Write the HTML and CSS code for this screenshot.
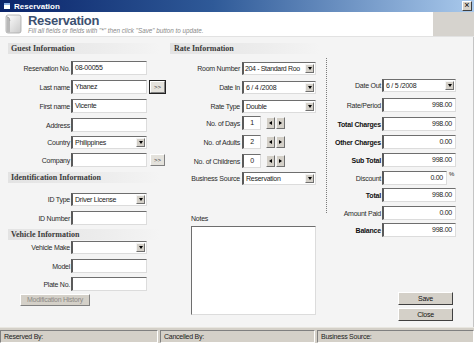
FILE: index.html
```html
<!DOCTYPE html>
<html>
<head>
<meta charset="utf-8">
<title>Reservation</title>
<link rel="stylesheet" href="styles.css">
</head>
<body>
<div class="window">
  <div class="titlebar">
    <span class="tb-icon"></span>
    <span class="tb-title">Reservation</span>
    <span class="tb-close">×</span>
  </div>
  <div class="header">
    <svg class="hdr-icon" viewBox="0 0 17 20" width="17" height="20">
      <defs>
        <linearGradient id="pg" x1="0" y1="0" x2="1" y2="1">
          <stop offset="0" stop-color="#ffffff"/>
          <stop offset="1" stop-color="#c9c9c9"/>
        </linearGradient>
      </defs>
      <rect x="1" y="1" width="15" height="18" rx="2" fill="url(#pg)" stroke="#a8a8a8" stroke-width="0.8"/>
      <path d="M1.5 2.5 Q5 3 5 7 L5 18.5 L2 18.5 Q1.5 18.5 1.5 17.5 Z" fill="#b9b9b9"/>
      <path d="M5 7 Q5 3 1.5 2.5" fill="none" stroke="#8f8f8f" stroke-width="0.6"/>
    </svg>
    <div class="hdr-text">
      <div class="hdr-title">Reservation</div>
      <div class="hdr-sub">Fill all fields or fields with "*" then click "Save" button to update.</div>
    </div>
    <div class="hdr-grey"></div>
  </div>

  <div class="content">
    <div class="col-left">
      <div class="sect sect-left m6">Guest Information</div>
      <div class="row m7"><span class="lbl">Reservation No.</span><span class="inp">08-00055</span></div>
      <div class="row m5"><span class="lbl">Last name</span><span class="inp">Ybanez</span><span class="btn-more focus">&gt;&gt;</span></div>
      <div class="row m5"><span class="lbl">First name</span><span class="inp">Vicente</span></div>
      <div class="row m5"><span class="lbl">Address</span><span class="inp"></span></div>
      <div class="row sel-row m4"><span class="lbl">Country</span><span class="sel"><span class="sel-text">Philippines</span><span class="sel-btn"></span></span></div>
      <div class="row m4"><span class="lbl">Company</span><span class="inp"></span><span class="btn-more">&gt;&gt;</span></div>
      <div class="sect sect-left m5">Identification Information</div>
      <div class="row sel-row m10"><span class="lbl">ID Type</span><span class="sel"><span class="sel-text">Driver License</span><span class="sel-btn"></span></span></div>
      <div class="row m5"><span class="lbl">ID Number</span><span class="inp"></span></div>
      <div class="sect sect-left m4">Vehicle Information</div>
      <div class="row sel-row m1"><span class="lbl">Vehicle Make</span><span class="sel"><span class="sel-text"></span><span class="sel-btn"></span></span></div>
      <div class="row m5"><span class="lbl">Model</span><span class="inp"></span></div>
      <div class="row m4"><span class="lbl">Plate No.</span><span class="inp"></span></div>
      <div class="btn-hist m3">Modification History</div>
    </div>

    <div class="col-mid">
      <div class="sect sect-mid m6">Rate Information</div>
      <div class="row sel-row m8"><span class="lbl">Room Number</span><span class="sel"><span class="sel-text tight">204 - Standard Roo</span><span class="sel-btn"></span></span></div>
      <div class="row sel-row m6"><span class="lbl">Date In</span><span class="sel"><span class="sel-text">6 / 4 /2008</span><span class="sel-btn"></span></span></div>
      <div class="row sel-row m6"><span class="lbl">Rate Type</span><span class="sel"><span class="sel-text">Double</span><span class="sel-btn"></span></span></div>
      <div class="row m3"><span class="lbl">No. of Days</span><span class="inp num">1</span><span class="spin"><span class="spin-btn left"></span><span class="spin-btn right"></span></span></div>
      <div class="row m5"><span class="lbl">No. of Adults</span><span class="inp num">2</span><span class="spin"><span class="spin-btn left"></span><span class="spin-btn right"></span></span></div>
      <div class="row m5"><span class="lbl">No. of Childrens</span><span class="inp num">0</span><span class="spin"><span class="spin-btn left"></span><span class="spin-btn right"></span></span></div>
      <div class="row sel-row m4"><span class="lbl">Business Source</span><span class="sel"><span class="sel-text">Reservation</span><span class="sel-btn"></span></span></div>
      <div class="notes-lbl">Notes</div>
      <div class="notes"></div>
    </div>

    <div class="col-right">
      <div class="divider"></div>
      <div class="rform">
        <div class="row sel-row m42"><span class="lbl">Date Out</span><span class="sel"><span class="sel-text">6 / 5 /2008</span><span class="sel-btn"></span></span></div>
        <div class="row m6"><span class="lbl">Rate/Period</span><span class="inp amt">998.00</span></div>
        <div class="row m5"><span class="lbl b">Total Charges</span><span class="inp amt">998.00</span></div>
        <div class="row m4"><span class="lbl b">Other Charges</span><span class="inp amt">0.00</span></div>
        <div class="row m4"><span class="lbl b">Sub Total</span><span class="inp amt">998.00</span></div>
        <div class="row m4"><span class="lbl">Discount</span><span class="inp amt disc">0.00</span><span class="pct">%</span></div>
        <div class="row m3"><span class="lbl b">Total</span><span class="inp amt">998.00</span></div>
        <div class="row m4"><span class="lbl">Amount Paid</span><span class="inp amt">0.00</span></div>
        <div class="row m3"><span class="lbl b">Balance</span><span class="inp amt">998.00</span></div>
        <div class="btn m55">Save</div>
        <div class="btn m3">Close</div>
      </div>
    </div>
  </div>

  <div class="statusbar">
    <div class="panel p1">Reserved By:</div>
    <div class="panel p2">Cancelled By:</div>
    <div class="panel p3">Business Source:</div>
  </div>
</div>
</body>
</html>
```

FILE: styles.css
```css
html, body {
  margin: 0;
  padding: 0;
}
body {
  font-family: "Liberation Sans", Arial, sans-serif;
  font-size: 7px;
  letter-spacing: -0.25px;
  color: #222;
  background: #f4f4f4;
}
.window {
  width: 474px;
  height: 343px;
  display: flex;
  flex-direction: column;
  overflow: hidden;
}

/* title bar */
.titlebar {
  height: 12px;
  flex: none;
  display: flex;
  align-items: center;
  background: linear-gradient(90deg, #0a246a 0%, #2f5a98 45%, #a9c9ec 100%);
  color: #fff;
}
.tb-icon {
  width: 6px;
  height: 4px;
  margin-left: 4px;
  background: #fff;
  border-top: 2px solid #8fb4e8;
}
.tb-title {
  margin-left: 4px;
  font-weight: bold;
  font-size: 8px;
  letter-spacing: 0;
}
.tb-close {
  margin-left: auto;
  margin-right: 2px;
  width: 8px;
  height: 8px;
  background: #d4d0c8;
  border: 1px solid;
  border-color: #fff #404040 #404040 #fff;
  font-size: 9px;
  line-height: 7px;
  text-align: center;
  color: #000;
  letter-spacing: 0;
}

/* header */
.header {
  height: 24px;
  flex: none;
  display: flex;
  background: #fff;
  border-bottom: 1px solid #e2e2e2;
}
.hdr-icon {
  flex: none;
  margin: 2px 0 0 5px;
}
.hdr-text {
  margin-left: 6px;
  padding-top: 1px;
}
.hdr-title {
  font-size: 13px;
  font-weight: bold;
  color: #3d5170;
  line-height: 15px;
  letter-spacing: -0.3px;
}
.hdr-sub {
  font-size: 6.3px;
  font-style: italic;
  color: #8a8a8a;
  line-height: 6px;
  letter-spacing: 0;
}
.hdr-grey {
  margin-left: auto;
  width: 41px;
  background: #d6d3ce;
}

/* content */
.content {
  flex: 1;
  display: flex;
  border-right: 1px solid #c4c4c4;
}
.col-left {
  width: 170px;
  flex: none;
  padding-left: 8px;
  box-sizing: border-box;
  display: flex;
  flex-direction: column;
}
.col-mid {
  width: 156px;
  flex: none;
  display: flex;
  flex-direction: column;
}
.col-right {
  flex: 1;
  display: flex;
}

.m1 { margin-top: 1px; }
.m3 { margin-top: 3px; }
.m4 { margin-top: 4px; }
.m5 { margin-top: 5px; }
.m6 { margin-top: 6px; }
.m7 { margin-top: 7px; }
.m8 { margin-top: 8px; }
.m10 { margin-top: 10px; }
.m42 { margin-top: 42px; }
.m55 { margin-top: 55px; }

.sect {
  height: 11px;
  flex: none;
  box-sizing: border-box;
  background: linear-gradient(90deg, #e3e3e3 0%, #ececec 60%, #f4f4f4 100%);
  font-family: "Liberation Serif", "Times New Roman", serif;
  font-weight: bold;
  font-size: 8px;
  line-height: 11px;
  color: #3a3a3a;
  letter-spacing: 0;
}
.sect-left {
  width: 152px;
  padding-left: 3px;
}
.sect-mid {
  width: 150px;
  padding-left: 4px;
}

.row {
  display: flex;
  align-items: center;
  height: 14px;
  flex: none;
}
.sel-row {
  height: 13px;
}
.lbl {
  flex: none;
  text-align: right;
  white-space: nowrap;
  box-sizing: border-box;
  color: #2a2a2a;
}
.lbl.b {
  font-weight: bold;
  color: #111;
  letter-spacing: -0.2px;
}
.col-left .lbl {
  width: 63px;
  padding-right: 1px;
}
.col-mid .lbl {
  width: 72px;
  padding-right: 2px;
}
.rform .lbl {
  width: 55px;
  padding-right: 1px;
}

.inp {
  flex: none;
  width: 76px;
  height: 14px;
  box-sizing: border-box;
  background: #fff;
  border-style: solid;
  border-width: 1px 1px 1px 2px;
  border-color: #6e6e6e #dcdcdc #dcdcdc #5a5a5a;
  padding-left: 2px;
  line-height: 12px;
  overflow: hidden;
  white-space: nowrap;
  color: #1a1a1a;
}
.col-mid .inp,
.rform .inp {
  width: 74px;
}
.col-mid .inp.num {
  width: 19px;
  padding-left: 0;
  text-align: center;
}
.inp.amt {
  text-align: right;
  padding-right: 3px;
}
.rform .inp.disc {
  width: 65px;
}
.pct {
  align-self: flex-start;
  margin-left: 2px;
  font-size: 6px;
  line-height: 7px;
}

.sel {
  flex: none;
  width: 76px;
  height: 13px;
  box-sizing: border-box;
  display: flex;
  background: #fff;
  border-style: solid;
  border-width: 1px 1px 1px 2px;
  border-color: #6e6e6e #dcdcdc #dcdcdc #5a5a5a;
}
.col-mid .sel,
.rform .sel {
  width: 74px;
}
.sel-text {
  flex: 1;
  overflow: hidden;
  white-space: nowrap;
  padding-left: 2px;
  line-height: 11px;
  color: #1a1a1a;
}
.sel-text.tight {
  padding-left: 1px;
  letter-spacing: -0.35px;
}
.sel-btn {
  flex: none;
  width: 9px;
  height: 9px;
  margin: 1px;
  box-sizing: border-box;
  background: #d4d0c8;
  border: 1px solid;
  border-color: #f4f4f4 #707070 #707070 #f4f4f4;
  display: flex;
  align-items: center;
  justify-content: center;
}
.sel-btn::after {
  content: "";
  width: 0;
  height: 0;
  border-left: 2.5px solid transparent;
  border-right: 2.5px solid transparent;
  border-top: 3px solid #000;
}

.btn-more {
  flex: none;
  width: 15px;
  height: 12px;
  margin-left: 3px;
  box-sizing: border-box;
  background: #e4e2dc;
  border: 1px solid;
  border-color: #fff #808080 #808080 #fff;
  font-size: 6px;
  line-height: 10px;
  text-align: center;
  letter-spacing: 0;
  color: #333;
}
.btn-more.focus {
  outline: 1px solid #222;
}

.spin {
  display: flex;
  margin-left: 5px;
  gap: 1px;
}
.spin-btn {
  width: 9px;
  height: 12px;
  box-sizing: border-box;
  background: #d4d0c8;
  border: 1px solid;
  border-color: #f4f4f4 #707070 #707070 #f4f4f4;
  display: flex;
  align-items: center;
  justify-content: center;
}
.spin-btn.left::after {
  content: "";
  border-top: 2.5px solid transparent;
  border-bottom: 2.5px solid transparent;
  border-right: 3px solid #000;
}
.spin-btn.right::after {
  content: "";
  border-top: 2.5px solid transparent;
  border-bottom: 2.5px solid transparent;
  border-left: 3px solid #000;
}

.btn-hist {
  flex: none;
  width: 70px;
  height: 12px;
  margin-left: 12px;
  box-sizing: border-box;
  background: #d4d0c8;
  border: 1px solid;
  border-color: #fff #808080 #808080 #fff;
  color: #8c8a86;
  text-align: center;
  line-height: 10px;
}

.notes-lbl {
  margin: 29px 0 0 21px;
  line-height: 9px;
  color: #2a2a2a;
}
.notes {
  margin: 3px 0 0 21px;
  width: 125px;
  height: 89px;
  box-sizing: border-box;
  background: #fff;
  border: 1px solid;
  border-color: #6e6e6e #dcdcdc #dcdcdc #6e6e6e;
}

.divider {
  flex: none;
  width: 0;
  height: 155px;
  margin-top: 21px;
  border-left: 1px dotted #7a7a7a;
}
.rform {
  display: flex;
  flex-direction: column;
}
.btn {
  flex: none;
  width: 55px;
  height: 13px;
  margin-left: 71px;
  box-sizing: border-box;
  background: #d4d0c8;
  border: 1px solid;
  border-color: #fff #404040 #404040 #fff;
  text-align: center;
  line-height: 11px;
  color: #111;
}

/* status bar */
.statusbar {
  height: 16px;
  flex: none;
  display: flex;
  gap: 2px;
  padding-top: 2px;
  box-sizing: border-box;
  background: #d4d0c8;
  border-top: 1px solid #e8e6e0;
}
.panel {
  height: 13px;
  box-sizing: border-box;
  border: 1px solid;
  border-color: #808080 #fff #fff #808080;
  padding-left: 3px;
  line-height: 11px;
  color: #222;
}
.p1 { width: 158px; }
.p2 { width: 155px; }
.p3 { flex: 1; }
```
